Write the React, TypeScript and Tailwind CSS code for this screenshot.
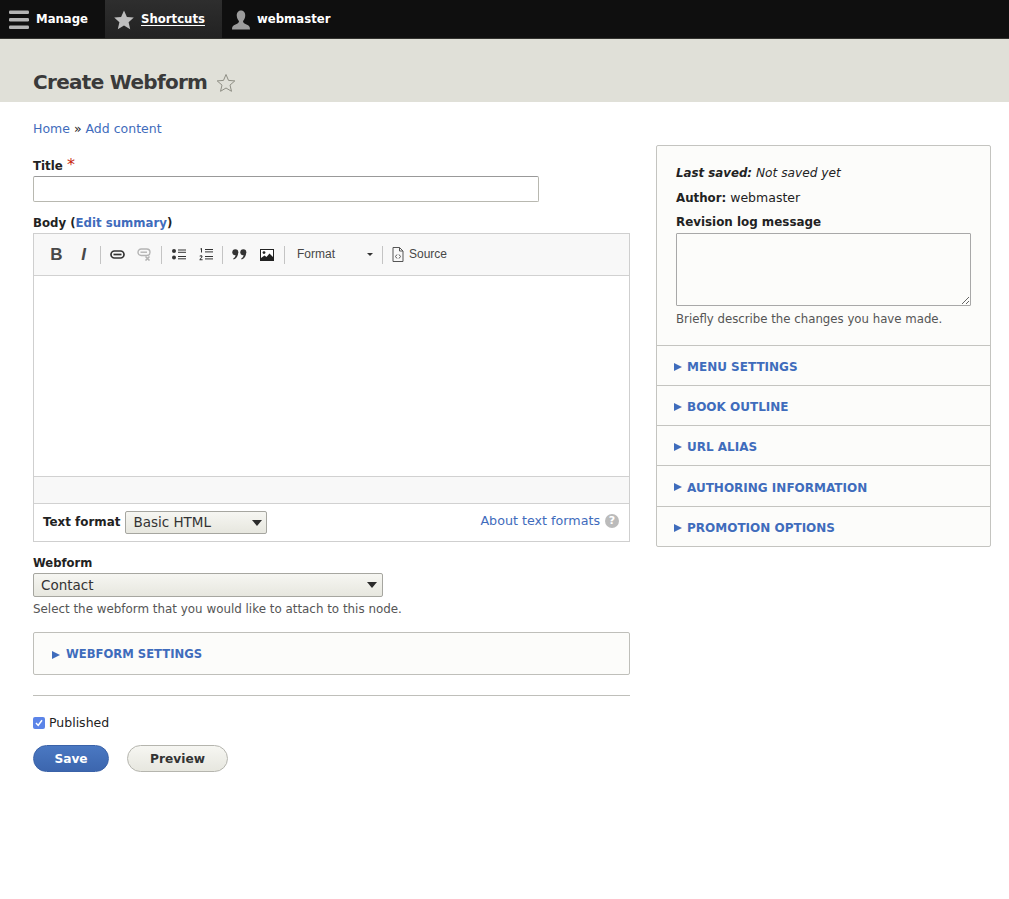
import React from 'react';

const link = 'text-[#3f6cbc]';
const font = "font-['DejaVu_Sans',sans-serif]";

function Sep() {
  return <span className="mx-[3px] h-[18px] w-px bg-[#c4c4c4]" />;
}

function Tri({ className = '' }: { className?: string }) {
  return (
    <svg width="8" height="8" viewBox="0 0 8 8" className={className}>
      <path d="M0 0 L8 4 L0 8 Z" fill="#3f6cbc" />
    </svg>
  );
}

function Caret() {
  return (
    <svg width="10" height="6" viewBox="0 0 10 6">
      <path d="M0 0 H10 L5 6 Z" fill="#2b2b2b" />
    </svg>
  );
}

function TbBtn({ children }: { children: React.ReactNode }) {
  return <span className="flex h-[18px] w-[27px] items-center justify-center">{children}</span>;
}

function SideItem({ label, h }: { label: string; h: string }) {
  return (
    <div className={`flex items-center border-t border-[#c4c4c0] pl-[17px] pt-[2px] ${h}`}>
      <Tri className="mr-[5px]" />
      <span className={`mt-[1px] text-[12px] font-bold ${link}`}>{label}</span>
    </div>
  );
}

export default function App() {
  return (
    <div className={`min-h-[899px] bg-white text-[12.5px] text-[#222] ${font}`}>
      <div className="flex h-[39px] items-stretch border-b border-[#33332f] bg-[#0f0f0f] text-[11.7px] font-bold text-white">
        <div className="flex items-center pl-[9px] pr-[17px] pt-[1px]">
          <svg width="20" height="20" viewBox="0 0 20 20" className="mr-[7px]">
            <rect x="0" y="0.5" width="20" height="3.5" rx="1.2" fill="#b4b4b4" />
            <rect x="0" y="8" width="20" height="3.5" rx="1.2" fill="#b4b4b4" />
            <rect x="0" y="15.5" width="20" height="3.5" rx="1.2" fill="#b4b4b4" />
          </svg>
          <span className="mt-[1px]">Manage</span>
        </div>
        <div className="flex w-[117px] items-center bg-gradient-to-b from-[#2e2e2e] to-[#222] pl-[9px] pt-[1px]">
          <svg width="20" height="20" viewBox="0 0 20 20" className="mr-[7px]">
            <path d="M10 0.5 L12.9 7 L19.8 7.6 L14.6 12.2 L16.2 19.2 L10 15.5 L3.8 19.2 L5.4 12.2 L0.2 7.6 L7.1 7 Z" fill="#bdbdbd" />
          </svg>
          <span className="mt-[1px] underline underline-offset-2">Shortcuts</span>
        </div>
        <div className="flex items-center pl-[9px] pt-[1px]">
          <svg width="20" height="20" viewBox="0 0 20 20" className="mr-[6px]">
            <path d="M10 0.5 C13 0.5 14.5 3 14.2 6 C14 8.5 13 10 12 11 C12 12.5 13 13.5 15.5 14.5 C18 15.5 19 16.5 19 19.5 H1 C1 16.5 2 15.5 4.5 14.5 C7 13.5 8 12.5 8 11 C7 10 6 8.5 5.8 6 C5.5 3 7 0.5 10 0.5 Z" fill="#9c9c9c" />
          </svg>
          <span className="mt-[1px]">webmaster</span>
        </div>
      </div>

      <div className="flex h-[63px] items-end bg-[#e0e0d8] pb-[4px] pl-[33px]">
        <h1 className="text-[20px] font-bold leading-[32px] tracking-[-0.7px] text-[#3a3a3a]">Create Webform</h1>
        <svg width="20" height="20" viewBox="0 0 20 20" className="mb-[5px] ml-[9px]">
          <path d="M10 1.5 L12.5 7.4 L18.8 7.9 L14 12.1 L15.5 18.3 L10 15 L4.5 18.3 L6 12.1 L1.2 7.9 L7.5 7.4 Z" fill="none" stroke="#8e8e84" />
        </svg>
      </div>

      <div className="flex px-[18px] pl-[33px] pt-[18px]">
        <div className="w-[597px]">
          <div className="leading-[17px]">
            <span className={link}>Home</span> » <span className={link}>Add content</span>
          </div>

          <div className="mt-[20px] text-[11.8px] font-bold leading-[18px]">
            Title <span className="text-[16px] font-normal leading-[12px] text-[#c8260e]">*</span>
          </div>
          <input className="mt-[1px] block h-[26px] w-[506px] rounded-[2px] border border-[#b8b8b0] border-t-[#999] bg-white" />

          <div className="mt-[12px] text-[11.75px] font-bold leading-[18px]">
            Body (<span className={link}>Edit summary</span>)
          </div>

          <div className="mt-[1px] border border-[#cfcfcf]">
            <div className="flex h-[42px] items-center border-b border-[#d1d1d1] bg-[#f8f8f8] pl-[9px] text-[12px] font-['Liberation_Sans',sans-serif] text-[#474747]">
              <TbBtn>
                <span className="text-[17px] font-bold leading-none text-[#484848]">B</span>
              </TbBtn>
              <TbBtn>
                <span className="text-[17px] font-bold italic leading-none text-[#484848]">I</span>
              </TbBtn>
              <Sep />
              <TbBtn>
                <svg width="15" height="9" viewBox="0 0 15 9" fill="none" stroke="#333" strokeWidth="1.7">
                  <rect x="1" y="1" width="13" height="7" rx="3.5" />
                  <path d="M3.5 4.5 H11.5" />
                </svg>
              </TbBtn>
              <TbBtn>
                <svg width="15" height="13" viewBox="0 0 15 13" fill="none" stroke="#b4b4b4" strokeWidth="1.4">
                  <rect x="1" y="1" width="12" height="6.5" rx="3.2" />
                  <path d="M3.5 4.2 H10" />
                  <path d="M8.5 8.5 L12.5 12.5 M12.5 8.5 L8.5 12.5" strokeWidth="1.6" />
                </svg>
              </TbBtn>
              <Sep />
              <TbBtn>
                <svg width="14" height="11" viewBox="0 0 14 11" fill="#333">
                  <circle cx="2" cy="2" r="2" />
                  <circle cx="2" cy="8.5" r="2" />
                  <rect x="6" y="0.5" width="8" height="1" />
                  <rect x="6" y="2.8" width="8" height="1" />
                  <rect x="6" y="7" width="8" height="1" />
                  <rect x="6" y="9.3" width="8" height="1" />
                </svg>
              </TbBtn>
              <TbBtn>
                <svg width="14" height="13" viewBox="0 0 14 13" fill="#333">
                  <path d="M1.5 0.5 L3 0 V4.5 H2 V1.3 L1.2 1.5 Z" />
                  <path d="M0.5 8 C1 7 3.5 7 3.5 8.6 C3.5 9.8 2 10.3 1.6 11.2 H3.6 V12.2 H0.4 C0.5 10.3 2.4 9.8 2.4 8.7 C2.4 8 1.4 8.1 1 8.7 Z" />
                  <rect x="6" y="1" width="8" height="1" />
                  <rect x="6" y="3.4" width="8" height="1" />
                  <rect x="6" y="8" width="8" height="1" />
                  <rect x="6" y="10.4" width="8" height="1" />
                </svg>
              </TbBtn>
              <Sep />
              <TbBtn>
                <svg width="15" height="11" viewBox="0 0 15 11" fill="#333">
                  <circle cx="3.3" cy="3.3" r="3" />
                  <path d="M6 3 C6.3 7 4.5 9.5 1.6 10.6 L1.2 9.6 C3 8.6 3.6 7.2 3.6 5.6 Z" />
                  <circle cx="11.3" cy="3.3" r="3" />
                  <path d="M14 3 C14.3 7 12.5 9.5 9.6 10.6 L9.2 9.6 C11 8.6 11.6 7.2 11.6 5.6 Z" />
                </svg>
              </TbBtn>
              <TbBtn>
                <svg width="14" height="12" viewBox="0 0 14 12">
                  <rect width="14" height="12" fill="#222" />
                  <rect x="1" y="1" width="12" height="10" fill="#fff" />
                  <circle cx="4" cy="3.6" r="1.4" fill="#222" />
                  <path d="M1 11 V9 L4.5 6.5 L6.5 8 L9.5 4.5 L13 8 V11 Z" fill="#222" />
                </svg>
              </TbBtn>
              <span className="w-px" />
              <Sep />
              <span className="mb-[2px] ml-[9px] flex w-[82px] items-center">
                <span className="flex-1">Format</span>
                <svg width="6" height="3" viewBox="0 0 6 3" className="mr-[6px] mt-[2px]">
                  <path d="M0 0 H6 L3 3 Z" fill="#333" />
                </svg>
              </span>
              <Sep />
              <svg width="12" height="15" viewBox="0 0 12 15" fill="none" stroke="#555" className="ml-[6px] mr-[5px]">
                <path d="M1 .5 H7.5 L11 4 V14.5 H1 Z M7.5 .5 V4 H11" />
                <path d="M5 7.5 L3.5 9.5 L5 11.5 M7 7.5 L8.5 9.5 L7 11.5" />
              </svg>
              <span className="mb-[2px]">Source</span>
            </div>
            <div className="h-[200px] bg-white" />
            <div className="h-[27px] border-t border-[#d1d1d1] bg-[#f8f8f8]" />
            <div className="flex h-[38px] items-center border-t border-[#d1d1d1] pl-[9px] pr-[10px]">
              <b className="mr-[5px] text-[11.9px]">Text format</b>
              <div className="flex h-[23px] w-[142px] items-center justify-between rounded-[2px] border border-[#a6a6a0] bg-gradient-to-b from-[#f6f6f2] to-[#e7e7df] pl-[7px] pr-[4px] text-[13.5px] text-[#333]">
                Basic HTML
                <Caret />
              </div>
              <span className={`ml-auto mb-[3px] text-[12.7px] ${link}`}>About text formats</span>
              <span className="mb-[3px] ml-[5px] flex h-[14px] w-[14px] items-center justify-center rounded-full bg-[#bbb] text-[11px] font-bold text-white">?</span>
            </div>
          </div>

          <div className="mt-[12px] text-[11.6px] font-bold leading-[18px]">Webform</div>
          <div className="mt-[1px] flex h-[24px] w-[350px] items-center justify-between rounded-[2px] border border-[#a6a6a0] bg-gradient-to-b from-[#f6f6f2] to-[#e7e7df] pl-[7px] pr-[5px] text-[13.5px] text-[#333]">
            Contact
            <Caret />
          </div>
          <div className="mt-[3px] text-[11.9px] leading-[18px] text-[#555]">Select the webform that you would like to attach to this node.</div>

          <div className="mt-[14px] flex h-[43px] items-center rounded-[2px] border border-[#bfbfba] bg-[#fcfcfa] pl-[18px] pt-[2px]">
            <Tri className="mr-[6px]" />
            <span className={`mt-[1px] text-[11.6px] font-bold ${link}`}>WEBFORM SETTINGS</span>
          </div>

          <div className="mt-[20px] border-t border-[#bfbfba]" />

          <div className="mt-[18px] flex items-center leading-[18px]">
            <span className="mr-[4px] flex h-[12px] w-[12px] items-center justify-center rounded-[2px] bg-[#5b84e8]">
              <svg width="8" height="8" viewBox="0 0 8 8" fill="none" stroke="#fff" strokeWidth="1.5">
                <path d="M1 4 L3.2 6.4 L7 1.2" />
              </svg>
            </span>
            Published
          </div>

          <div className="mt-[13px] flex gap-[18px] text-[12.2px] font-bold">
            <span className="flex h-[27px] w-[76px] items-center justify-center rounded-full border border-[#3a62a8] bg-gradient-to-b from-[#4a78c2] to-[#3c66ae] pt-[1px] text-white">Save</span>
            <span className="flex h-[27px] w-[101px] items-center justify-center rounded-full border border-[#b5b5ae] bg-gradient-to-b from-[#f6f6f2] to-[#e7e7df] pt-[1px] text-[#333]">Preview</span>
          </div>
        </div>

        <div className="ml-[26px] mt-[25px] w-[335px] self-start">
          <div className="rounded-[2px] border border-[#c4c4c0] bg-[#fcfcfa]">
            <div className="px-[19px] pb-[17px] pt-[18px]">
              <div className="text-[12.2px] italic leading-[18px]"><b className="text-[11.8px]">Last saved:</b> Not saved yet</div>
              <div className="mt-[7px] leading-[18px]"><b className="text-[11.8px]">Author:</b> webmaster</div>
              <div className="mt-[6px] text-[11.9px] font-bold leading-[18px]">Revision log message</div>
              <textarea className="mt-[2px] block h-[73px] w-full rounded-[1px] border border-[#a8a8a8] bg-[#fcfcfa]" />
              <div className="mt-[4px] text-[11.75px] leading-[18px] text-[#555]">Briefly describe the changes you have made.</div>
            </div>
            <SideItem label="MENU SETTINGS" h="h-[40px]" />
            <SideItem label="BOOK OUTLINE" h="h-[40px]" />
            <SideItem label="URL ALIAS" h="h-[40px]" />
            <SideItem label="AUTHORING INFORMATION" h="h-[41px]" />
            <SideItem label="PROMOTION OPTIONS" h="h-[40px]" />
          </div>
        </div>
      </div>
    </div>
  );
}
